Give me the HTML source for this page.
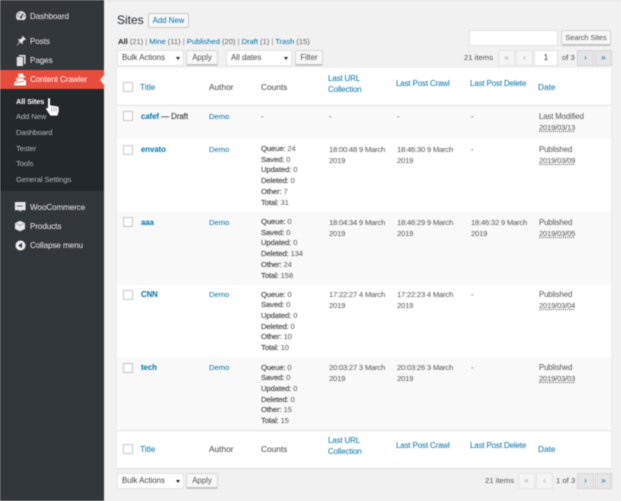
<!DOCTYPE html>
<html><head><meta charset="utf-8"><style>
html,body{margin:0;padding:0}
body{width:621px;height:501px;overflow:hidden;position:relative;background:#f1f1f1;font-family:"Liberation Sans",sans-serif;font-size:8px;color:#444}
#w{position:absolute;left:0;top:0;width:621px;height:501px;overflow:hidden;filter:blur(.42px)}
.t,.b{position:absolute;white-space:nowrap;line-height:11px}
.b{box-sizing:border-box}
.m{color:#eee;font-size:8.1px;letter-spacing:-.08px}
.s{color:#b4b9be;font-size:7.7px;letter-spacing:-.13px}
a,.l{color:#0073aa;text-decoration:none}
.h{color:#0073aa;font-size:8.3px}
.h2{color:#0073aa;font-size:8px;letter-spacing:-.16px}
.k{font-weight:bold;color:#0073aa;font-size:7.8px;letter-spacing:-.06px}
.d{color:#555;font-size:7.7px;letter-spacing:-.24px}
.dt{color:#555;font-size:7.8px;letter-spacing:-.12px}
.dt u{font-size:7.6px;letter-spacing:-.18px;text-decoration-style:dotted}
.c{color:#555;font-size:7.7px;letter-spacing:-.14px;line-height:10.7px}
.c b{font-weight:normal;-webkit-text-stroke:.2px #555}
.cb{position:absolute;left:123px;width:8px;height:8px;background:#fff;border:1px solid #c4c8cb;box-sizing:content-box}
.btn{position:absolute;box-sizing:border-box;background:#f7f7f7;border:1px solid #d5d5d5;border-bottom-color:#c4c4c4;border-bottom-width:2px;border-radius:2px;color:#555;text-align:center;line-height:14px;height:16px;font-size:7.8px}
.sel{position:absolute;box-sizing:border-box;background:#fff;border:1px solid #e2e2e2;height:16px;line-height:14px;color:#444;padding-left:4px;font-size:7.9px}
.sel:after{content:"";position:absolute;right:3px;top:6px;border:2.5px solid transparent;border-top:3px solid #222;border-bottom:0}
.pg{position:absolute;box-sizing:border-box;width:17px;height:16px;border:1px solid #e5e5e5;background:#f4f4f4;color:#a0a5aa;text-align:center;line-height:13px}
.pa{background:#e5e5e5;border-color:#d5d5d5;color:#0073aa}
svg{position:absolute}
</style></head><body><div id="w">
<div class="b" style="left:0;top:0;width:621px;height:1px;background:#e6e6e6"></div>
<div class="b" style="left:0;top:0;width:104px;height:501px;background:#32373c"></div>
<div class="b" style="left:0;top:89px;width:104px;height:102px;background:#23282d"></div>
<div class="b" style="left:0;top:70px;width:104px;height:19px;background:#e74c3c"></div>
<div class="b" style="left:100px;top:75px;border:5px solid transparent;border-right:4px solid #f1f1f1;border-left:0;width:0;height:0"></div>

<svg style="left:15px;top:10px" width="12" height="12" viewBox="0 0 12 12"><path d="M6 1a5.2 5.2 0 0 0-5 5.2c0 1.6.6 3 1.6 3.8h6.8c1-.8 1.6-2.2 1.6-3.8A5.2 5.2 0 0 0 6 1z" fill="#dfe0e1"/><path d="M6 7 8 3.5" stroke="#32373c" stroke-width="1.2"/><circle cx="6" cy="7.4" r="1.2" fill="#32373c"/><circle cx="3" cy="6" r=".6" fill="#32373c"/><circle cx="4.4" cy="3.6" r=".6" fill="#32373c"/><circle cx="9.2" cy="6" r=".6" fill="#32373c"/></svg>
<svg style="left:15px;top:35px" width="12" height="13" viewBox="0 0 12 13"><path d="M7.5.8 11.2 4.5 10.2 5 9.4 4.6 7.6 7C8 8 7.9 8.7 7.4 9.2L5.4 7.2 1 11.8 4.6 6.4 2.8 4.6C3.4 4 4.2 4 5 4.4L7.4 2.6 7 1.8z" fill="#e6e7e8"/></svg>
<svg style="left:15px;top:54px" width="12" height="13" viewBox="0 0 12 13"><path d="M4 1h6.5v9H9V2.4H4z" fill="#e6e7e8"/><path d="M1.8 3H8v9H1.8z" fill="#e6e7e8"/><path d="M3.2 5h3.4M3.2 7h3.4M3.2 9h3.4" stroke="#b9bcbf" stroke-width=".6"/></svg>
<svg style="left:13px;top:73px" width="14" height="13" viewBox="0 0 14 13"><path d="M5 1 10 .5 10.5 3 13 4 10 5 11 7 13 7.5 13 12.5 1 12.5 1.5 9 4 7.5 2.5 5.5 5.5 4z" fill="#fff"/><path d="M4 5.5 10 4.5M3 9.5 11 8.5" stroke="#e74c3c" stroke-width=".8"/></svg>

<span class="t m" style="left:30px;top:11px">Dashboard</span>
<span class="t m" style="left:30px;top:36px">Posts</span>
<span class="t m" style="left:30px;top:55px">Pages</span>
<span class="t m" style="left:30px;top:74px;color:#fff">Content Crawler</span>
<span class="t s" style="left:16px;top:95.5px;color:#fff;font-weight:bold;font-size:7.4px;letter-spacing:-.1px">All Sites</span>
<span class="t s" style="left:16px;top:111px">Add New</span>
<span class="t s" style="left:16px;top:127px">Dashboard</span>
<span class="t s" style="left:16px;top:142.5px">Tester</span>
<span class="t s" style="left:16px;top:158px">Tools</span>
<span class="t s" style="left:16px;top:174px">General Settings</span>

<svg style="left:14px;top:201px" width="12" height="12" viewBox="0 0 12 12"><path d="M1.5 1h9.5a.6.6 0 0 1 .6.6v7a.6.6 0 0 1-.6.6H7.4L6.2 11 5.6 9.2H1.5a.6.6 0 0 1-.6-.6v-7a.6.6 0 0 1 .6-.6z" fill="#e6e7e8"/><path d="M3 5h6" stroke="#555" stroke-width="1.2" stroke-dasharray="1 .4"/></svg>
<svg style="left:14px;top:220px" width="12" height="12" viewBox="0 0 12 12"><path d="M6 .8 11 3v6L6 11.2 1 9V3z" fill="#e6e7e8"/><path d="M1.4 3.2 6 5.4 10.6 3.2M6 5.4V6.6" stroke="#8f9396" stroke-width=".7" fill="none"/></svg>
<svg style="left:15px;top:240px" width="11" height="11" viewBox="0 0 11 11"><circle cx="5.5" cy="5.5" r="5" fill="#eee"/><path d="M7 2.8v5.4L3.2 5.5z" fill="#32373c"/></svg>
<span class="t m" style="left:30px;top:202px">WooCommerce</span>
<span class="t m" style="left:30px;top:221px">Products</span>
<span class="t m" style="left:30px;top:240px">Collapse menu</span>

<svg style="left:45px;top:97px" width="15" height="21" viewBox="0 0 15 21"><path d="M2.6 2.2a1.4 1.4 0 0 1 2.8 0V8l7.4 1.2c.8.2 1.2.7 1.2 1.5v3.8L12.6 19H5.2L.9 12.4c-.8-1.3.7-2.5 1.7-1.5z" fill="#fff" stroke="#222" stroke-width=".7"/><path d="M6.7 10v4.6M9 10.2v4.4M11.2 10.5v4" stroke="#666" stroke-width=".5"/></svg>

<span class="t" style="left:117px;top:12px;font-size:12px;line-height:16px;color:#23282d">Sites</span>
<div class="b" style="left:148px;top:13px;width:41px;height:15px;background:#f7f7f7;border:1px solid #ccc;border-radius:2px;color:#0073aa;text-align:center;line-height:13px;font-size:7.8px">Add New</div>

<span class="t" style="left:118px;top:36px;font-size:7.7px;letter-spacing:-.06px"><b style="color:#222;font-weight:bold">All</b> <span style="color:#666">(21)</span> <span style="color:#888">|</span> <span class="l">Mine</span> <span style="color:#666">(11)</span> <span style="color:#888">|</span> <span class="l">Published</span> <span style="color:#666">(20)</span> <span style="color:#888">|</span> <span class="l">Draft</span> <span style="color:#666">(1)</span> <span style="color:#888">|</span> <span class="l">Trash</span> <span style="color:#666">(15)</span></span>

<div class="sel" style="left:117px;top:50px;width:67px">Bulk Actions</div>
<div class="btn" style="left:186px;top:50px;width:32px">Apply</div>
<div class="sel" style="left:226px;top:50px;width:66px">All dates</div>
<div class="btn" style="left:295px;top:50px;width:28px">Filter</div>

<div class="b" style="left:469px;top:30px;width:89px;height:16px;background:#fff;border:1px solid #e2e2e2"></div>
<div class="btn" style="left:561px;top:30px;width:50px;font-size:7.4px;letter-spacing:-.06px">Search Sites</div>
<span class="t" style="left:464px;top:52px;color:#555;font-size:7.7px">21 items</span>
<div class="pg" style="left:498px;top:50px">«</div>
<div class="pg" style="left:516px;top:50px">‹</div>
<div class="b" style="left:534px;top:50px;width:24px;height:16px;background:#fff;border:1px solid #e2e2e2;text-align:center;line-height:14px;color:#32373c">1</div>
<span class="t" style="left:562px;top:52px;color:#555;font-size:7.7px">of 3</span>
<div class="pg pa" style="left:577px;top:50px">›</div>
<div class="pg pa" style="left:595px;top:50px">»</div>

<div class="b" style="left:117px;top:68px;width:494px;height:400px;background:#fff;box-shadow:0 1px 1px rgba(0,0,0,.08)"></div>
<div class="b" style="left:117px;top:105px;width:494px;height:1px;background:#e1e1e1"></div>
<div class="b" style="left:117px;top:106px;width:494px;height:33px;background:#f9f9f9"></div>
<div class="b" style="left:117px;top:212px;width:494px;height:73px;background:#f9f9f9"></div>
<div class="b" style="left:117px;top:357px;width:494px;height:73px;background:#f9f9f9"></div>
<div class="b" style="left:117px;top:430px;width:494px;height:1px;background:#e1e1e1"></div>

<div class="cb" style="top:82px"></div><div class="cb" style="top:111px"></div><div class="cb" style="top:145px"></div><div class="cb" style="top:217px"></div><div class="cb" style="top:290px"></div><div class="cb" style="top:363px"></div><div class="cb" style="top:444px"></div>

<span class="t h" style="left:140px;top:81.5px">Title</span>
<span class="t" style="left:209px;top:81.5px;font-size:8.3px">Author</span>
<span class="t" style="left:261px;top:81.5px;font-size:8.3px">Counts</span>
<span class="t h2" style="left:328px;top:73px">Last URL</span>
<span class="t h2" style="left:328px;top:84px">Collection</span>
<span class="t h2" style="left:396px;top:78px">Last Post Crawl</span>
<span class="t h2" style="left:470px;top:78px">Last Post Delete</span>
<span class="t h" style="left:538px;top:81.5px">Date</span>

<span class="t" style="left:141px;top:110.5px"><span class="k">cafef</span> <b style="color:#555;font-weight:normal;font-size:7.8px;-webkit-text-stroke:.25px #555">— Draft</b></span>
<span class="t l" style="left:209px;top:110.5px;font-size:7.6px">Demo</span>
<span class="t d" style="left:261px;top:110.5px">-</span>
<span class="t d" style="left:329px;top:110.5px">-</span>
<span class="t d" style="left:397px;top:110.5px">-</span>
<span class="t d" style="left:471px;top:110.5px">-</span>
<span class="t dt" style="left:539px;top:110.5px">Last Modified</span>
<span class="t dt" style="left:539px;top:121.5px"><u>2019/03/13</u></span>

<span class="t k" style="left:141px;top:143.5px">envato</span>
<span class="t l" style="left:209px;top:143.5px;font-size:7.6px">Demo</span>
<span class="t c" style="left:261px;top:144px"><b>Queue:</b> 24<br><b>Saved:</b> 0<br><b>Updated:</b> 0<br><b>Deleted:</b> 0<br><b>Other:</b> 7<br><b>Total:</b> 31</span>
<span class="t d" style="left:329px;top:143.5px">18:00:48 9 March<br>2019</span>
<span class="t d" style="left:397px;top:143.5px">18:46:30 9 March<br>2019</span>
<span class="t d" style="left:471px;top:143.5px">-</span>
<span class="t dt" style="left:539px;top:143.5px">Published<br><u>2019/03/09</u></span>

<span class="t k" style="left:141px;top:216.5px">aaa</span>
<span class="t l" style="left:209px;top:216.5px;font-size:7.6px">Demo</span>
<span class="t c" style="left:261px;top:217px"><b>Queue:</b> 0<br><b>Saved:</b> 0<br><b>Updated:</b> 0<br><b>Deleted:</b> 134<br><b>Other:</b> 24<br><b>Total:</b> 158</span>
<span class="t d" style="left:329px;top:216.5px">18:04:34 9 March<br>2019</span>
<span class="t d" style="left:397px;top:216.5px">18:46:29 9 March<br>2019</span>
<span class="t d" style="left:471px;top:216.5px">18:46:32 9 March<br>2019</span>
<span class="t dt" style="left:539px;top:216.5px">Published<br><u>2019/03/05</u></span>

<span class="t k" style="left:141px;top:289px">CNN</span>
<span class="t l" style="left:209px;top:289px;font-size:7.6px">Demo</span>
<span class="t c" style="left:261px;top:289.5px"><b>Queue:</b> 0<br><b>Saved:</b> 0<br><b>Updated:</b> 0<br><b>Deleted:</b> 0<br><b>Other:</b> 10<br><b>Total:</b> 10</span>
<span class="t d" style="left:329px;top:289px">17:22:27 4 March<br>2019</span>
<span class="t d" style="left:397px;top:289px">17:22:23 4 March<br>2019</span>
<span class="t d" style="left:471px;top:289px">-</span>
<span class="t dt" style="left:539px;top:289px">Published<br><u>2019/03/04</u></span>

<span class="t k" style="left:141px;top:362px">tech</span>
<span class="t l" style="left:209px;top:362px;font-size:7.6px">Demo</span>
<span class="t c" style="left:261px;top:362.5px"><b>Queue:</b> 0<br><b>Saved:</b> 0<br><b>Updated:</b> 0<br><b>Deleted:</b> 0<br><b>Other:</b> 15<br><b>Total:</b> 15</span>
<span class="t d" style="left:329px;top:362px">20:03:27 3 March<br>2019</span>
<span class="t d" style="left:397px;top:362px">20:03:26 3 March<br>2019</span>
<span class="t d" style="left:471px;top:362px">-</span>
<span class="t dt" style="left:539px;top:362px">Published<br><u>2019/03/03</u></span>

<span class="t h" style="left:140px;top:443.5px">Title</span>
<span class="t" style="left:209px;top:443.5px;font-size:8.3px">Author</span>
<span class="t" style="left:261px;top:443.5px;font-size:8.3px">Counts</span>
<span class="t h2" style="left:328px;top:435px">Last URL</span>
<span class="t h2" style="left:328px;top:446px">Collection</span>
<span class="t h2" style="left:396px;top:440px">Last Post Crawl</span>
<span class="t h2" style="left:470px;top:440px">Last Post Delete</span>
<span class="t h" style="left:538px;top:443.5px">Date</span>

<div class="sel" style="left:117px;top:473px;width:67px">Bulk Actions</div>
<div class="btn" style="left:186px;top:473px;width:32px">Apply</div>
<span class="t" style="left:485px;top:475px;color:#555;font-size:7.7px">21 items</span>
<div class="pg" style="left:518px;top:473px">«</div>
<div class="pg" style="left:536px;top:473px">‹</div>
<span class="t" style="left:556px;top:475px;color:#555;font-size:7.7px">1 of 3</span>
<div class="pg pa" style="left:577px;top:473px">›</div>
<div class="pg pa" style="left:595px;top:473px">»</div>
</div></body></html>
